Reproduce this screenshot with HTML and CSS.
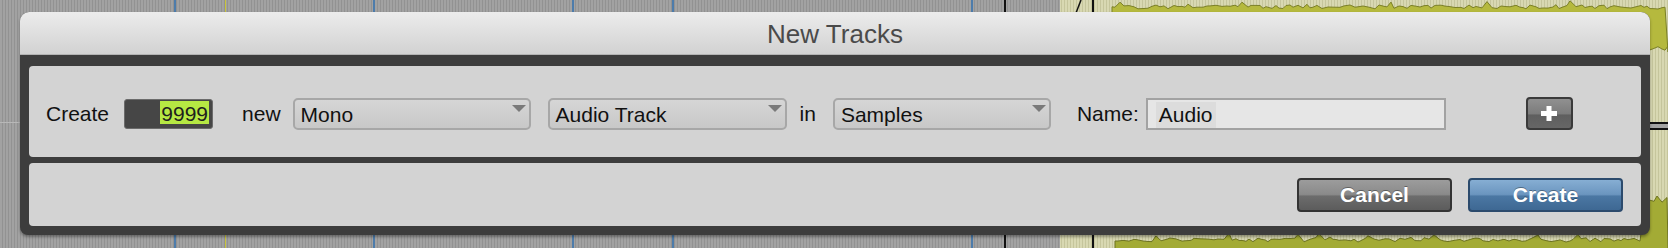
FILE: index.html
```html
<!DOCTYPE html>
<html lang="en">
<head>
    <meta charset="UTF-8">
    <meta name="viewport" content="width=device-width, initial-scale=1.0">
    <title>New Tracks</title>
    <link rel="stylesheet" href="styles.css">
</head>
<body>
    <!-- edit window behind the dialog -->
    <svg class="edit-window" width="1668" height="248" viewBox="0 0 1668 248">
        <defs>
            <pattern id="greyStripes" width="3" height="4" patternUnits="userSpaceOnUse">
                <rect width="3" height="4" fill="#a2a2a2"/>
                <rect x="2" width="1" height="4" fill="#929292"/>
            </pattern>
            <pattern id="clipStripes" width="3" height="4" patternUnits="userSpaceOnUse">
                <rect width="3" height="4" fill="#d8d8b2"/>
                <rect x="2" width="1" height="4" fill="#c5c59c"/>
            </pattern>
        </defs>
        <rect width="1060" height="248" fill="url(#greyStripes)"/>
        <rect x="1060" width="608" height="248" fill="url(#clipStripes)"/>
        <rect y="122" width="1060" height="1" fill="#b8b8b8"/>
        <g class="markers">
            <rect x="174" width="2" height="248" fill="#4d7cab"/>
            <rect x="225" width="1" height="248" fill="#c9c43a"/>
            <rect x="373" width="2" height="248" fill="#4d7cab"/>
            <rect x="572" width="2" height="248" fill="#4d7cab"/>
            <rect x="672" width="2" height="248" fill="#4d7cab"/>
            <rect x="971" width="2" height="248" fill="#4d7cab"/>
            <rect x="1004" width="2" height="248" fill="#111"/>
            <rect x="1092" width="2" height="248" fill="#111"/>
            <line x1="1081" y1="0" x2="1076" y2="13" stroke="#111" stroke-width="1.5"/>
        </g>
        <path id="waveTop" fill="#b5b93e" stroke="#7b8026" stroke-width="1"/>
        <path id="waveBottom" fill="#a3ab35" stroke="#6e7421" stroke-width="1"/>
        <rect x="1060" y="122" width="608" height="2" fill="#111"/>
        <rect x="1060" y="124" width="608" height="4" fill="#a3a3a3"/>
        <rect x="1060" y="128" width="608" height="2" fill="#111"/>
    </svg>

    <div class="dialog">
        <div class="title-bar">New Tracks</div>
        <div class="dialog-body">
            <div class="panel options">
                <span class="label">Create</span>
                <div class="count"><span>9999</span></div>
                <span class="label label-new">new</span>
                <div class="select select-format">Mono</div>
                <div class="select select-type">Audio Track</div>
                <span class="label label-in">in</span>
                <div class="select select-base">Samples</div>
                <span class="label label-name">Name:</span>
                <div class="name-field"><span>Audio</span></div>
                <button class="add-btn">
                    <svg width="16" height="15" viewBox="0 0 16 15">
                        <rect x="0" y="5" width="16" height="5" fill="#fff"/>
                        <rect x="5.5" y="0" width="5" height="15" fill="#fff"/>
                    </svg>
                </button>
            </div>
            <div class="panel actions">
                <button class="btn btn-cancel">Cancel</button>
                <button class="btn btn-create">Create</button>
            </div>
        </div>
    </div>

    <script>
        // cheap seeded random so the waveform looks the same every time
        let seed = 7;
        function rnd() {
            seed = (seed * 9301 + 49297) % 233280;
            return seed / 233280;
        }

        function edge(x0, x1, yFor) {
            const pts = [];
            for (let x = x0; x <= x1; x += 3 + Math.floor(rnd() * 4)) {
                pts.push(x + ',' + yFor(x).toFixed(1));
            }
            return pts;
        }

        // top track: peaks just above the dialog, bottom of the envelope shows on the right
        const topEdge = edge(1112, 1668, x => {
            const spike = rnd() < 0.15 ? rnd() * 5 : 0;
            return 9 - rnd() * 4 - spike;
        });
        const topLower = edge(1600, 1668, () => 46 + rnd() * 8).reverse();
        document.getElementById('waveTop').setAttribute('d',
            'M1112,14 L' + topEdge.join(' L') + ' L1668,52 L' + topLower.join(' L') + ' L1600,60 L1112,60 Z');

        // bottom track: louder on the far right
        const bottomEdge = edge(1115, 1668, x => {
            if (x >= 1645) return 196 + rnd() * 8;
            const spike = rnd() < 0.2 ? rnd() * 6 : 0;
            return 242 - rnd() * 4 - spike;
        });
        document.getElementById('waveBottom').setAttribute('d',
            'M1115,249 L' + bottomEdge.join(' L') + ' L1668,249 Z');
    </script>
</body>
</html>
```

FILE: styles.css
```css
body {
    margin: 0;
    width: 1668px;
    height: 248px;
    overflow: hidden;
    position: relative;
    font-family: "Liberation Sans", Arial, sans-serif;
}
.edit-window {
    display: block;
}
.dialog {
    position: absolute;
    left: 20px;
    top: 12px;
    width: 1630px;
    height: 223px;
    background: #3d3d3d;
    border-radius: 9px 9px 8px 8px;
    box-shadow: 0 2px 3px rgba(0, 0, 0, 0.35);
    display: flex;
    flex-direction: column;
}
.title-bar {
    height: 43px;
    box-sizing: border-box;
    padding-top: 2px;
    line-height: 40px;
    text-align: center;
    font-size: 26px;
    color: #4a4a4a;
    background: linear-gradient(#ececec, #d2d2d2);
    border-bottom: 1px solid #b3b3b3;
    border-radius: 9px 9px 0 0;
}
.dialog-body {
    flex: 1;
    padding: 11px 9px 9px;
    display: flex;
    flex-direction: column;
    gap: 6px;
}
.panel {
    background: #d3d3d3;
    border-radius: 4px;
    display: flex;
    align-items: center;
}
.options {
    height: 91px;
    box-sizing: border-box;
    padding: 4px 0 0 17px;
}
.actions {
    flex: 1;
    justify-content: flex-end;
    gap: 16px;
    padding-right: 18px;
}
.label {
    font-size: 21px;
    color: #111;
}
.label-new {
    margin-left: 29px;
}
.label-in {
    margin-left: 13px;
}
.label-name {
    margin-left: 26px;
}
.count {
    margin-left: 15px;
    width: 89px;
    height: 30px;
    box-sizing: border-box;
    background: #464646;
    border: 1px solid #6b6b6b;
    border-radius: 3px;
    display: flex;
    justify-content: flex-end;
    align-items: flex-start;
    padding: 1px 3px 0 0;
}
.count span {
    background: #b6e843;
    color: #1e1e1e;
    font-size: 21px;
    height: 23px;
    line-height: 25px;
    padding: 0 1px;
}
.select {
    height: 32px;
    box-sizing: border-box;
    border: 2px solid #a7a7a7;
    border-radius: 5px;
    background: linear-gradient(#d6d6d6, #c8c8c8);
    display: flex;
    align-items: center;
    justify-content: space-between;
    padding: 2px 3px 0 6px;
    font-size: 21px;
    color: #111;
}
.select::after {
    content: "";
    align-self: flex-start;
    margin-top: 3px;
    border-left: 7px solid transparent;
    border-right: 7px solid transparent;
    border-top: 7px solid #7a7a7a;
}
.select-format {
    margin-left: 12px;
    width: 238px;
}
.select-type {
    margin-left: 17px;
    width: 239px;
}
.select-base {
    margin-left: 17px;
    width: 218px;
}
.name-field {
    margin-left: 7px;
    width: 300px;
    height: 32px;
    box-sizing: border-box;
    border: 2px solid #a2a2a2;
    background: #e6e6e6;
    display: flex;
    align-items: center;
    padding: 2px 0 0 8px;
}
.name-field span {
    background: #dcdcdc;
    font-size: 21px;
    color: #111;
    height: 26px;
    line-height: 26px;
    padding: 0 3px;
}
.add-btn {
    margin-left: 80px;
    width: 47px;
    height: 33px;
    box-sizing: border-box;
    border: 2px solid #3a3a3a;
    border-radius: 4px;
    background: linear-gradient(#909090, #7c7c7c 50%, #5f5f5f 56%, #666);
    display: flex;
    align-items: center;
    justify-content: center;
    padding: 0;
}
.add-btn svg {
    display: block;
}
.btn {
    width: 155px;
    height: 34px;
    box-sizing: border-box;
    border: 2px solid #333;
    border-radius: 4px;
    color: #fff;
    font-family: "Liberation Sans", Arial, sans-serif;
    font-weight: bold;
    font-size: 21px;
    text-shadow: 0 -1px 0 rgba(0, 0, 0, 0.35);
    padding: 0;
}
.btn-cancel {
    background: linear-gradient(#9c9c9c, #8a8a8a 48%, #6c6c6c 54%, #5c5c5c);
}
.btn-create {
    border-color: #2b4a6c;
    background: linear-gradient(#86aed3, #6b95bf 48%, #4b77a3 54%, #3e6893);
}
```
